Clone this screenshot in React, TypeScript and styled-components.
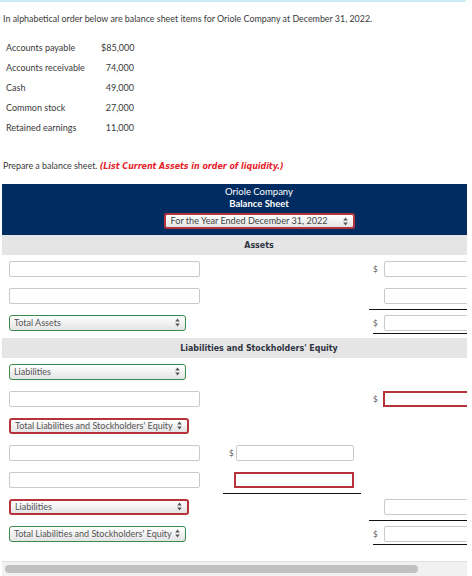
import React from 'react';
import styled, { createGlobalStyle } from 'styled-components';

const GlobalStyle = createGlobalStyle`
  html, body {
    margin: 0;
    padding: 0;
    background: #fff;
  }
  body {
    font-family: Lato, "Open Sans", "Liberation Sans", sans-serif;
    color: #3a3a3a;
  }
`;

const Page = styled.div`
  width: 472px;
  padding: 0 5px 0 2px;
  box-sizing: border-box;
`;

const TopEdge = styled.div`
  width: 466px;
  height: 2px;
  margin-left: -2px;
  background: #c7ecf3;
  border-radius: 0 0 3px 0;
`;

const Intro = styled.p`
  margin: 10px 0 0 1px;
  font-size: 8.9px;
  line-height: 14px;
`;

const ItemsTable = styled.div`
  display: grid;
  grid-template-columns: 95px 33px;
  grid-auto-rows: 20px;
  align-items: center;
  margin: 11px 0 0 4px;
  font-size: 9px;
  white-space: nowrap;
`;

const ItemAmount = styled.span`
  text-align: right;
`;

const Instruction = styled.p`
  margin: 22px 0 0 1px;
  font-size: 8.9px;
  line-height: 14px;
`;

const Emphasis = styled.span`
  font-family: "DejaVu Sans Condensed", "DejaVu Sans", sans-serif;
  font-size: 8.8px;
  color: #e4222b;
  font-weight: 700;
  font-style: italic;
`;

const SheetViewport = styled.div`
  width: 465px;
  margin-top: 11px;
  overflow: hidden;
`;

const Sheet = styled.div`
  width: 514px;
`;

const SheetHeader = styled.div`
  background: #002c62;
  color: #fff;
  text-align: center;
  font-size: 9.5px;
  line-height: 12px;
  padding: 2px 0 6px;
  display: flex;
  flex-direction: column;
  align-items: center;
`;

const Strong = styled.span`
  font-weight: 700;
`;

const SectionBar = styled.div<{ $gap?: number }>`
  background: #e5e5e5;
  height: 20px;
  margin-top: ${(p) => p.$gap ?? 0}px;
  display: flex;
  align-items: center;
  justify-content: center;
  font-family: "DejaVu Sans Condensed", "DejaVu Sans", sans-serif;
  font-size: 8.8px;
  font-weight: 700;
  color: #2f3440;
`;

const Row = styled.div`
  display: grid;
  grid-template-columns: 218px 145px 151px;
  height: 27px;
`;

const LabelCell = styled.div`
  display: flex;
  align-items: center;
  padding-left: 7px;
`;

const AmountCell = styled.div<{ $indent: number; $rule?: boolean }>`
  display: flex;
  align-items: center;
  padding-left: ${(p) => p.$indent}px;
  ${(p) =>
    p.$rule &&
    `
    margin: 0 4px 0 3px;
    padding-left: ${p.$indent - 3}px;
    border-top: 1px solid #111;
  `}
`;

const TotalCell = styled.div`
  margin-left: 4px;
  padding: 5px 0 0 4px;
  border-top: 1px solid #111;
`;

const Underline = styled.div`
  display: flex;
  align-items: center;
  padding-bottom: 2px;
  border-bottom: 1px solid #111;
`;

const Dollar = styled.span<{ $w: number }>`
  width: ${(p) => p.$w}px;
  flex: none;
  font-family: "DejaVu Sans Condensed", "DejaVu Sans", sans-serif;
  font-size: 8.5px;
  color: #555;
`;

const Field = styled.div<{ $w: number; $alert?: boolean }>`
  width: ${(p) => p.$w}px;
  height: 16px;
  box-sizing: border-box;
  background: #fff;
  flex: none;
  border: ${(p) => (p.$alert ? '2px solid #b5333a' : '1px solid #c9c9c9')};
  border-radius: ${(p) => (p.$alert ? 0 : 2)}px;
`;

const SelectBox = styled.div<{ $tone: 'red' | 'green'; $w: number }>`
  width: ${(p) => p.$w}px;
  height: 16px;
  box-sizing: border-box;
  display: flex;
  align-items: center;
  justify-content: space-between;
  padding: 0 5px 0 4px;
  border: ${(p) => (p.$tone === 'red' ? '2px solid #b5333a' : '1.5px solid #3d8a4c')};
  border-radius: 3px;
  background: linear-gradient(#ffffff, #e4e4e4);
  font-size: 9px;
  color: #555;
  white-space: nowrap;
`;

const HeaderSelect = styled(SelectBox)`
  margin-top: 3px;
  font-size: 9.1px;
  color: #444;
  padding: 0 5px 0 5px;
`;

const ScrollTrack = styled.div`
  width: 465px;
  height: 15px;
  margin-top: 14px;
  box-sizing: border-box;
  background: #f1f1f1;
  border-top: 1px solid #e2e2e2;
  padding: 3px 0 0 3px;
`;

const ScrollThumb = styled.div`
  width: 413px;
  height: 8px;
  border-radius: 4px;
  background: #c1c1c1;
`;

function Arrows() {
  return (
    <svg width="5" height="9" viewBox="0 0 5 9">
      <path d="M2.5 0.5 L4.8 3.6 H0.2 Z M2.5 8.5 L4.8 5.4 H0.2 Z" fill="#555" />
    </svg>
  );
}

function Select({ text, tone, width }: { text: string; tone: 'red' | 'green'; width: number }) {
  return (
    <SelectBox $tone={tone} $w={width}>
      <span>{text}</span>
      <Arrows />
    </SelectBox>
  );
}

const items = [
  ['Accounts payable', '$85,000'],
  ['Accounts receivable', '74,000'],
  ['Cash', '49,000'],
  ['Common stock', '27,000'],
  ['Retained earnings', '11,000'],
];

export default function App() {
  return (
    <Page>
      <GlobalStyle />
      <TopEdge />
      <Intro>
        In alphabetical order below are balance sheet items for Oriole Company at December 31, 2022.
      </Intro>
      <ItemsTable>
        {items.map(([label, amount]) => (
          <React.Fragment key={label}>
            <span>{label}</span>
            <ItemAmount>{amount}</ItemAmount>
          </React.Fragment>
        ))}
      </ItemsTable>
      <Instruction>
        Prepare a balance sheet. <Emphasis>(List Current Assets in order of liquidity.)</Emphasis>
      </Instruction>

      <SheetViewport>
        <Sheet>
          <SheetHeader>
            <span>Oriole Company</span>
            <Strong>Balance Sheet</Strong>
            <HeaderSelect $tone="red" $w={191}>
              <span>For the Year Ended December 31, 2022</span>
              <Arrows />
            </HeaderSelect>
          </SheetHeader>
          <SectionBar>Assets</SectionBar>

          <Row>
            <LabelCell><Field $w={191} /></LabelCell>
            <div />
            <AmountCell $indent={8}>
              <Dollar $w={11}>$</Dollar>
              <Field $w={120} />
            </AmountCell>
          </Row>
          <Row>
            <LabelCell><Field $w={191} /></LabelCell>
            <div />
            <AmountCell $indent={8}>
              <Dollar $w={11} />
              <Field $w={120} />
            </AmountCell>
          </Row>
          <Row>
            <LabelCell><Select text="Total Assets" tone="green" width={177} /></LabelCell>
            <div />
            <TotalCell>
              <Underline>
                <Dollar $w={11}>$</Dollar>
                <Field $w={120} />
              </Underline>
            </TotalCell>
          </Row>

          <SectionBar $gap={2}>Liabilities and Stockholders' Equity</SectionBar>

          <Row>
            <LabelCell><Select text="Liabilities" tone="green" width={177} /></LabelCell>
          </Row>
          <Row>
            <LabelCell><Field $w={191} /></LabelCell>
            <div />
            <AmountCell $indent={8}>
              <Dollar $w={10}>$</Dollar>
              <Field $w={121} $alert />
            </AmountCell>
          </Row>
          <Row>
            <LabelCell>
              <Select text="Total Liabilities and Stockholders' Equity" tone="red" width={180} />
            </LabelCell>
          </Row>
          <Row>
            <LabelCell><Field $w={191} /></LabelCell>
            <AmountCell $indent={9}>
              <Dollar $w={7}>$</Dollar>
              <Field $w={118} />
            </AmountCell>
          </Row>
          <Row>
            <LabelCell><Field $w={191} /></LabelCell>
            <AmountCell $indent={9}>
              <Dollar $w={5} />
              <Field $w={120} $alert />
            </AmountCell>
          </Row>
          <Row>
            <LabelCell><Select text="Liabilities" tone="red" width={180} /></LabelCell>
            <AmountCell $indent={9} $rule />
            <AmountCell $indent={8}>
              <Dollar $w={11} />
              <Field $w={120} />
            </AmountCell>
          </Row>
          <Row>
            <LabelCell>
              <Select text="Total Liabilities and Stockholders' Equity" tone="green" width={177} />
            </LabelCell>
            <div />
            <TotalCell>
              <Underline>
                <Dollar $w={11}>$</Dollar>
                <Field $w={120} />
              </Underline>
            </TotalCell>
          </Row>
        </Sheet>
      </SheetViewport>

      <ScrollTrack>
        <ScrollThumb />
      </ScrollTrack>
    </Page>
  );
}
